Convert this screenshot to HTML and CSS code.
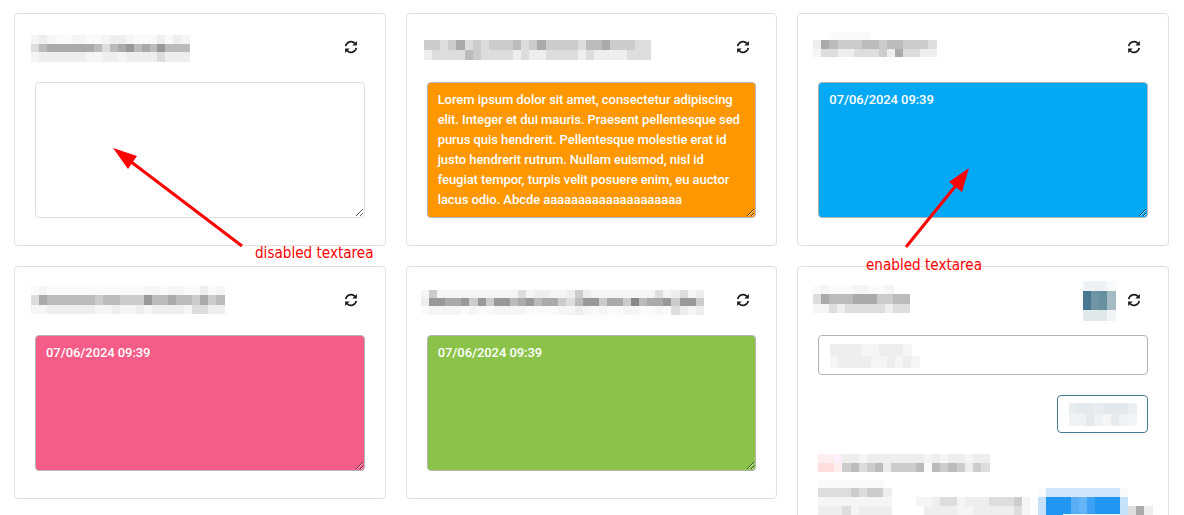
FILE: index.html
```html
<!DOCTYPE html>
<html lang="en">
<head>
<meta charset="utf-8">
<title>Textareas</title>
<link rel="stylesheet" href="styles.css">
</head>
<body>
<svg class="defs" width="0" height="0" aria-hidden="true">
  <symbol id="sync" viewBox="0 0 14 14">
    <path class="sync-arc" d="M1.7 6.1A5.4 5.4 0 0 1 11 3.4"/>
    <path class="sync-arc" d="M12.3 7.9A5.4 5.4 0 0 1 3 10.6"/>
    <polygon class="sync-tip" points="12.9,1 12.9,5.6 8.3,5.6"/>
    <polygon class="sync-tip" points="1.1,13 1.1,8.4 5.7,8.4"/>
  </symbol>
</svg>

<main class="grid">
  <section class="card">
    <header class="card-head">
      <div class="mosaic title-a" data-w="7.9" data-h="8.7" data-rows="g e g h h g g h h g e e g h h h e h e g|d b a a a a a a b d b a 9 b a b 9 b b b|g e e e e e e g g e e g e e e e d e e e"></div>
      <svg class="refresh"><use href="#sync"/></svg>
    </header>
    <textarea class="note note-disabled" disabled></textarea>
  </section>

  <section class="card">
    <header class="card-head">
      <div class="mosaic title-b" data-w="8.1" data-h="9.5" data-rows="c c d c a d c d c c c b d c a c c c c d b b a c c c d d|e d d d d b c d d d d e d e e d d d d e d e e e e d d d"></div>
      <svg class="refresh"><use href="#sync"/></svg>
    </header>
    <textarea class="note note-orange">Lorem ipsum dolor sit amet, consectetur adipiscing elit. Integer et dui mauris. Praesent pellentesque sed purus quis hendrerit. Pellentesque molestie erat id justo hendrerit rutrum. Nullam euismod, nisl id feugiat tempor, turpis velit posuere enim, eu auctor lacus odio. Abcde aaaaaaaaaaaaaaaaaaaa</textarea>
  </section>

  <section class="card">
    <header class="card-head">
      <div class="mosaic title-c" data-w="8.2" data-h="8.3" data-rows="f f h h h h h f f f f f f f f|e a b c c c b b c b b c c c d|g d d e e d d d c e a d d e e"></div>
      <svg class="refresh"><use href="#sync"/></svg>
    </header>
    <textarea class="note note-blue">07/06/2024 09:39</textarea>
  </section>

  <section class="card">
    <header class="card-head">
      <div class="mosaic title-d" data-w="8.05" data-h="9.3" data-rows="h g h h h h h h h h h h h h g g h g g h h e h g|d a b b b b b b c b b c c c 9 b b a b b c a c b|g g e e e e e e g g e g g e g e e e e g d d e e"></div>
      <svg class="refresh"><use href="#sync"/></svg>
    </header>
    <textarea class="note note-pink">07/06/2024 09:39</textarea>
  </section>

  <section class="card">
    <header class="card-head">
      <div class="mosaic title-e" data-w="8.08" data-h="8" data-rows="g c g g g g g g g g g g d g e e g g e c e g g g g g g g g d g e d g e|e 9 9 a a 9 c 9 c 9 9 b a 9 b a a c d b 9 9 c a a c 8 b a a 9 c 9 9 c|h g g g g h g h h g g g g h h h h g g e g h g h h g g h h g h d e g e"></div>
      <svg class="refresh"><use href="#sync"/></svg>
    </header>
    <textarea class="note note-green">07/06/2024 09:39</textarea>
  </section>

  <section class="card">
    <header class="card-head">
      <div class="mosaic title-f" data-w="8" data-h="9.3" data-rows="h g h h h g g h h g f f|d a b b b a a a c c b b|g g d e d d d d d e d d"></div>
      <div class="mosaic badge" data-w="8" data-h="9.75" data-rows="eef2f5 eef2f5 eef2f5 f8fafb|48778f 6f94a6 67909f a5bac2|48778f 6f94a6 67909f a5bac2|e0e8ea e0e8ea e0e8ea f0f4f7"></div>
      <svg class="refresh"><use href="#sync"/></svg>
    </header>
    <div class="field">
      <div class="mosaic" data-w="8.1" data-h="11.5" data-rows="e e e e g g e e e g|g e e e e g g e g e g"></div>
    </div>
    <div class="actions">
      <button class="action" type="button">
        <span class="mosaic" data-w="8.4" data-h="11" data-rows="e8edf0 e3e9ec e3e9ec e9edf0 e2e8eb e2e8eb e2e8eb ebeff2|f0f3f5 eef2f4 e3e9ec eff2f4 f3f5f7 e6ebee eff2f4 f1f4f6"></span>
      </button>
    </div>
    <div class="mosaic feed" data-w="8.15" data-h="8.6" data-rows="fee fee fef e e g e e e e e e e g e g e e g e e f f f f f f f f f f f f f f f f f f f f|fdd fdd fee c b d c b e c c c b h b c b c e c d f f f f f f f f f f f f f f f f f f f f|f f f f f f f f f f f f f f f f f f f f f f f f f f f f f f f f f f f f f f f f f|h h h h h h h h f f f f f f f f f f f f f f f f f f f f f f f f f f f f f f f f f|d d d d c d c c e f f f f f f f f f f f f f f f f f f h cfe6fb cfe6fb cfe6fb cfe6fb cfe6fb cfe6fb cfe6fb cfe6fb cfe6fb h f f f|g g g g g g g g g f f f g g e d d g e e e d d d c g f c5e2fa 2196f3 2196f3 2196f3 5aaef6 64b5f6 3ca0f5 2196f3 2196f3 2196f3 c5e2fa f f f|e e e d g e e e e f f f f e e e e g g e e e e e d g f c5e2fa 2196f3 2196f3 2196f3 5aaef6 64b5f6 3ca0f5 2196f3 2196f3 2196f3 c5e2fa d a e|f f f f f f f f f f f f f f f f f f f f f f f f f f f c5e2fa 2196f3 2196f3 dff dff dff dff dff dff dff c5e2fa f f f"></div>
  </section>
</main>

<svg class="callouts" width="1184" height="515" aria-hidden="true">
  <line class="callout-line" x1="242" y1="246" x2="126" y2="158"/>
  <polygon class="callout-head" points="113,148 137,156 128,169"/>
  <line class="callout-line" x1="906" y1="247" x2="958" y2="183"/>
  <polygon class="callout-head" points="969,168 949,182 962,192"/>
</svg>
<span class="callout-label label-disabled">disabled textarea</span>
<span class="callout-label label-enabled">enabled textarea</span>

<script src="script.js"></script>
</body>
</html>
```
FILE: styles.css
```css
* { box-sizing: border-box; }

html, body {
  margin: 0;
  height: 515px;
  overflow: hidden;
  background: #fff;
}

body {
  position: relative;
  font-family: Roboto, "Liberation Sans", sans-serif;
}

.defs { position: absolute; }

.grid {
  display: grid;
  grid-template-columns: repeat(3, 1fr);
  gap: 20px;
  align-items: start;
  padding: 13px 15px 0 14px;
}

.card {
  background: #fff;
  border: 1px solid #e0e0e0;
  border-radius: 4px;
  padding: 0 20px 27px;
}

.card-head {
  display: flex;
  align-items: flex-start;
  height: 68px;
}

.mosaic { display: block; flex: none; }
.mosaic svg { display: block; overflow: visible; }

.title-a { margin: 21px auto 0 -4px; }
.title-b { margin: 26px auto 0 -3px; }
.title-c { margin: 18px auto 0 -5px; }
.title-d { margin: 19px auto 0 -4px; }
.title-e { margin: 23px auto 0 -6px; }
.title-f { margin: 18px auto 0 -5px; }
.badge { margin: 14px 12px 0 0; }

.refresh {
  flex: none;
  width: 14px;
  height: 14px;
  margin: 26px 6.5px 0 0;
}

.sync-arc { fill: none; stroke: #1c1c1c; stroke-width: 1.6; }
.sync-tip { fill: #1c1c1c; }

.note {
  display: block;
  width: 100%;
  height: 136px;
  margin: 0;
  padding: 7px 10px;
  border: 1px solid #b4b4b4;
  border-radius: 4px;
  outline: none;
  color: #fff;
  font: 500 13px/20px Roboto, sans-serif;
  letter-spacing: -0.065px;
}

.note-disabled { background: #fff; border-color: #e0e0e0; }
.note-orange { background: #ff9800; }
.note-blue { background: #03a9f4; }
.note-pink { background: #f55c87; }
.note-green { background: #8bc34a; }

.field {
  height: 40px;
  padding: 8px 11px;
  border: 1px solid #b4b4b4;
  border-radius: 4px;
}

.actions {
  display: flex;
  justify-content: flex-end;
  margin-top: 20px;
}

.action {
  display: flex;
  align-items: center;
  justify-content: center;
  width: 91px;
  height: 38px;
  padding: 0;
  background: #fff;
  border: 1px solid #457b93;
  border-radius: 4px;
}

.feed { margin: 21px -6px 0 0; }

.callouts {
  position: absolute;
  left: 0;
  top: 0;
  pointer-events: none;
}

.callout-line { stroke: #fe0000; stroke-width: 3; }
.callout-head { fill: #fe0000; }

.callout-label {
  position: absolute;
  color: #fe0000;
  font: 15.1px/18px "DejaVu Sans", sans-serif;
  font-stretch: condensed;
  white-space: nowrap;
}

.label-disabled { left: 255px; top: 244px; }
.label-enabled { left: 866px; top: 256px; }
```
FILE: script.js
```js
// Draws the blurred (pixelated) regions from their cell data.
var NS = 'http://www.w3.org/2000/svg';
var TINTS = { g: '#f5f5f5', h: '#fafafa' };

function toColor(token) {
  if (TINTS[token]) return TINTS[token];
  return '#' + (token.length === 1 ? token + token + token : token);
}

document.querySelectorAll('.mosaic').forEach(function (el) {
  var w = parseFloat(el.dataset.w);
  var h = parseFloat(el.dataset.h);
  var rows = el.dataset.rows.split('|').map(function (r) { return r.trim().split(/\s+/); });
  var cols = Math.max.apply(null, rows.map(function (r) { return r.length; }));
  var svg = document.createElementNS(NS, 'svg');
  svg.setAttribute('width', cols * w);
  svg.setAttribute('height', rows.length * h);
  svg.setAttribute('shape-rendering', 'crispEdges');
  rows.forEach(function (row, y) {
    row.forEach(function (token, x) {
      if (token === 'f') return;
      var rect = document.createElementNS(NS, 'rect');
      rect.setAttribute('x', x * w);
      rect.setAttribute('y', y * h);
      rect.setAttribute('width', w + 0.5);
      rect.setAttribute('height', h + 0.5);
      rect.setAttribute('fill', toColor(token));
      svg.appendChild(rect);
    });
  });
  el.appendChild(svg);
});
```
